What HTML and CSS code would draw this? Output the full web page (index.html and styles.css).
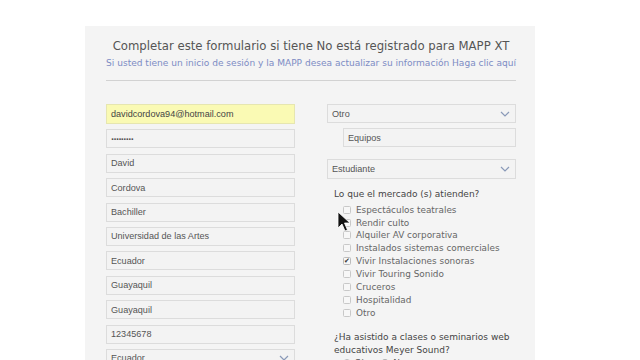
FILE: index.html
```html
<!DOCTYPE html>
<html lang="es">
<head>
<meta charset="utf-8">
<title>MAPP XT</title>
<link rel="stylesheet" href="styles.css">
</head>
<body>
<div class="card">
  <h1 class="title">Completar este formulario si tiene No está registrado para MAPP XT</h1>
  <p class="subtitle">Si usted tiene un inicio de sesión y la MAPP desea actualizar su información Haga clic aquí</p>
  <hr class="rule">
  <div class="cols">
    <div class="col">
      <div class="field yellow">davidcordova94@hotmail.com</div>
      <div class="field pwd">·········</div>
      <div class="field">David</div>
      <div class="field">Cordova</div>
      <div class="field">Bachiller</div>
      <div class="field">Universidad de las Artes</div>
      <div class="field">Ecuador</div>
      <div class="field">Guayaquil</div>
      <div class="field">Guayaquil</div>
      <div class="field">12345678</div>
      <div class="field select">Ecuador<svg class="chev" width="10" height="6" viewBox="0 0 10 6"><polyline points="1,1 5,5 9,1" fill="none" stroke="#8a9ab8" stroke-width="1.2"/></svg></div>
    </div>
    <div class="col">
      <div class="field select">Otro<svg class="chev" width="10" height="6" viewBox="0 0 10 6"><polyline points="1,1 5,5 9,1" fill="none" stroke="#8a9ab8" stroke-width="1.2"/></svg></div>
      <div class="field indent">Equipos</div>
      <div class="field select gap">Estudiante<svg class="chev" width="10" height="6" viewBox="0 0 10 6"><polyline points="1,1 5,5 9,1" fill="none" stroke="#8a9ab8" stroke-width="1.2"/></svg></div>
      <p class="question">Lo que el mercado (s) atienden?</p>
      <ul class="checks">
        <li><span class="box"></span>Espectáculos teatrales</li>
        <li><span class="box"></span>Rendir culto</li>
        <li><span class="box"></span>Alquiler AV corporativa</li>
        <li><span class="box"></span>Instalados sistemas comerciales</li>
        <li><span class="box on">✔</span>Vivir Instalaciones sonoras</li>
        <li><span class="box"></span>Vivir Touring Sonido</li>
        <li><span class="box"></span>Cruceros</li>
        <li><span class="box"></span>Hospitalidad</li>
        <li><span class="box"></span>Otro</li>
      </ul>
      <p class="question q2">¿Ha asistido a clases o seminarios web educativos Meyer Sound?</p>
      <div class="radios"><span class="radio"></span>Sí <span class="radio on"></span>No</div>
    </div>
  </div>
</div>
<svg class="cursor" width="14" height="22" viewBox="0 0 14 22"><path d="M1 1 L1 17 L5 13 L8 20 L10.5 19 L7.5 12 L13 12 Z" fill="#111" stroke="#fff" stroke-width="0.8"/></svg>
</body>
</html>
```
FILE: styles.css
```css
html, body {
  margin: 0;
  padding: 0;
  background: #ffffff;
  width: 640px;
  height: 360px;
  overflow: hidden;
  position: relative;
}
.card {
  margin: 26px 0 0 85px;
  width: 450px;
  height: 400px;
  background: #f4f4f4;
  box-sizing: border-box;
  padding: 13px 19px 0 21px;
  font-family: "DejaVu Sans", Verdana, sans-serif;
}
.title {
  margin: 0;
  text-align: center;
  font-size: 11.7px;
  font-weight: normal;
  color: #555;
  line-height: 14px;
}
.subtitle {
  margin: 4px 0 0;
  text-align: center;
  font-size: 9.05px;
  color: #7d8cc4;
  line-height: 12px;
}
.rule {
  margin: 11px 0 0;
  border: 0;
  border-top: 1px solid #d2d2d2;
  height: 0;
}
.cols {
  display: grid;
  grid-template-columns: 189px 189px;
  column-gap: 32px;
  margin-top: 23px;
}
.col {
  display: flex;
  flex-direction: column;
}
.field {
  height: 19px;
  box-sizing: border-box;
  border: 1px solid #dcdcdc;
  background: #f3f3f3;
  margin-bottom: 5.4px;
  font-family: "Liberation Sans", Arial, sans-serif;
  font-size: 9.1px;
  color: #555;
  padding: 0 4px;
  display: flex;
  align-items: center;
  justify-content: space-between;
}
.yellow {
  background: #fafab4;
  border-color: #e6e6b0;
  height: 20px;
  color: #444;
}
.pwd {
  font-size: 11px;
  letter-spacing: -1.2px;
  font-weight: bold;
}
.indent {
  margin-left: 16px;
}
.gap {
  margin-top: 6px;
  height: 20px;
}
.chev {
  margin-right: 1px;
}
.question {
  margin: 4px 0 0 7px;
  font-size: 9px;
  color: #444;
  line-height: 13px;
}
.checks {
  list-style: none;
  margin: 2px 0 0 16px;
  padding: 0;
}
.checks li {
  display: flex;
  align-items: center;
  height: 12.9px;
  font-size: 8.9px;
  color: #666;
}
.box {
  width: 6px;
  height: 6px;
  border: 1px solid #c8c8c8;
  background: #f7f7f7;
  border-radius: 1.5px;
  margin-right: 5px;
  font-size: 7px;
  line-height: 6px;
  color: #333;
  text-align: center;
  overflow: hidden;
}
.box.on {
  border-color: #bbb;
}
.q2 {
  margin-top: 12px;
}
.radios {
  margin: 1px 0 0 16px;
  font-size: 9px;
  color: #555;
  display: flex;
  align-items: center;
  gap: 4px;
}
.radio {
  width: 6px;
  height: 6px;
  border: 1px solid #bbb;
  border-radius: 50%;
  background: #fff;
}
.radio.on {
  background: #333;
  margin-left: 14px;
}
.cursor {
  position: absolute;
  left: 337px;
  top: 211px;
}
```
